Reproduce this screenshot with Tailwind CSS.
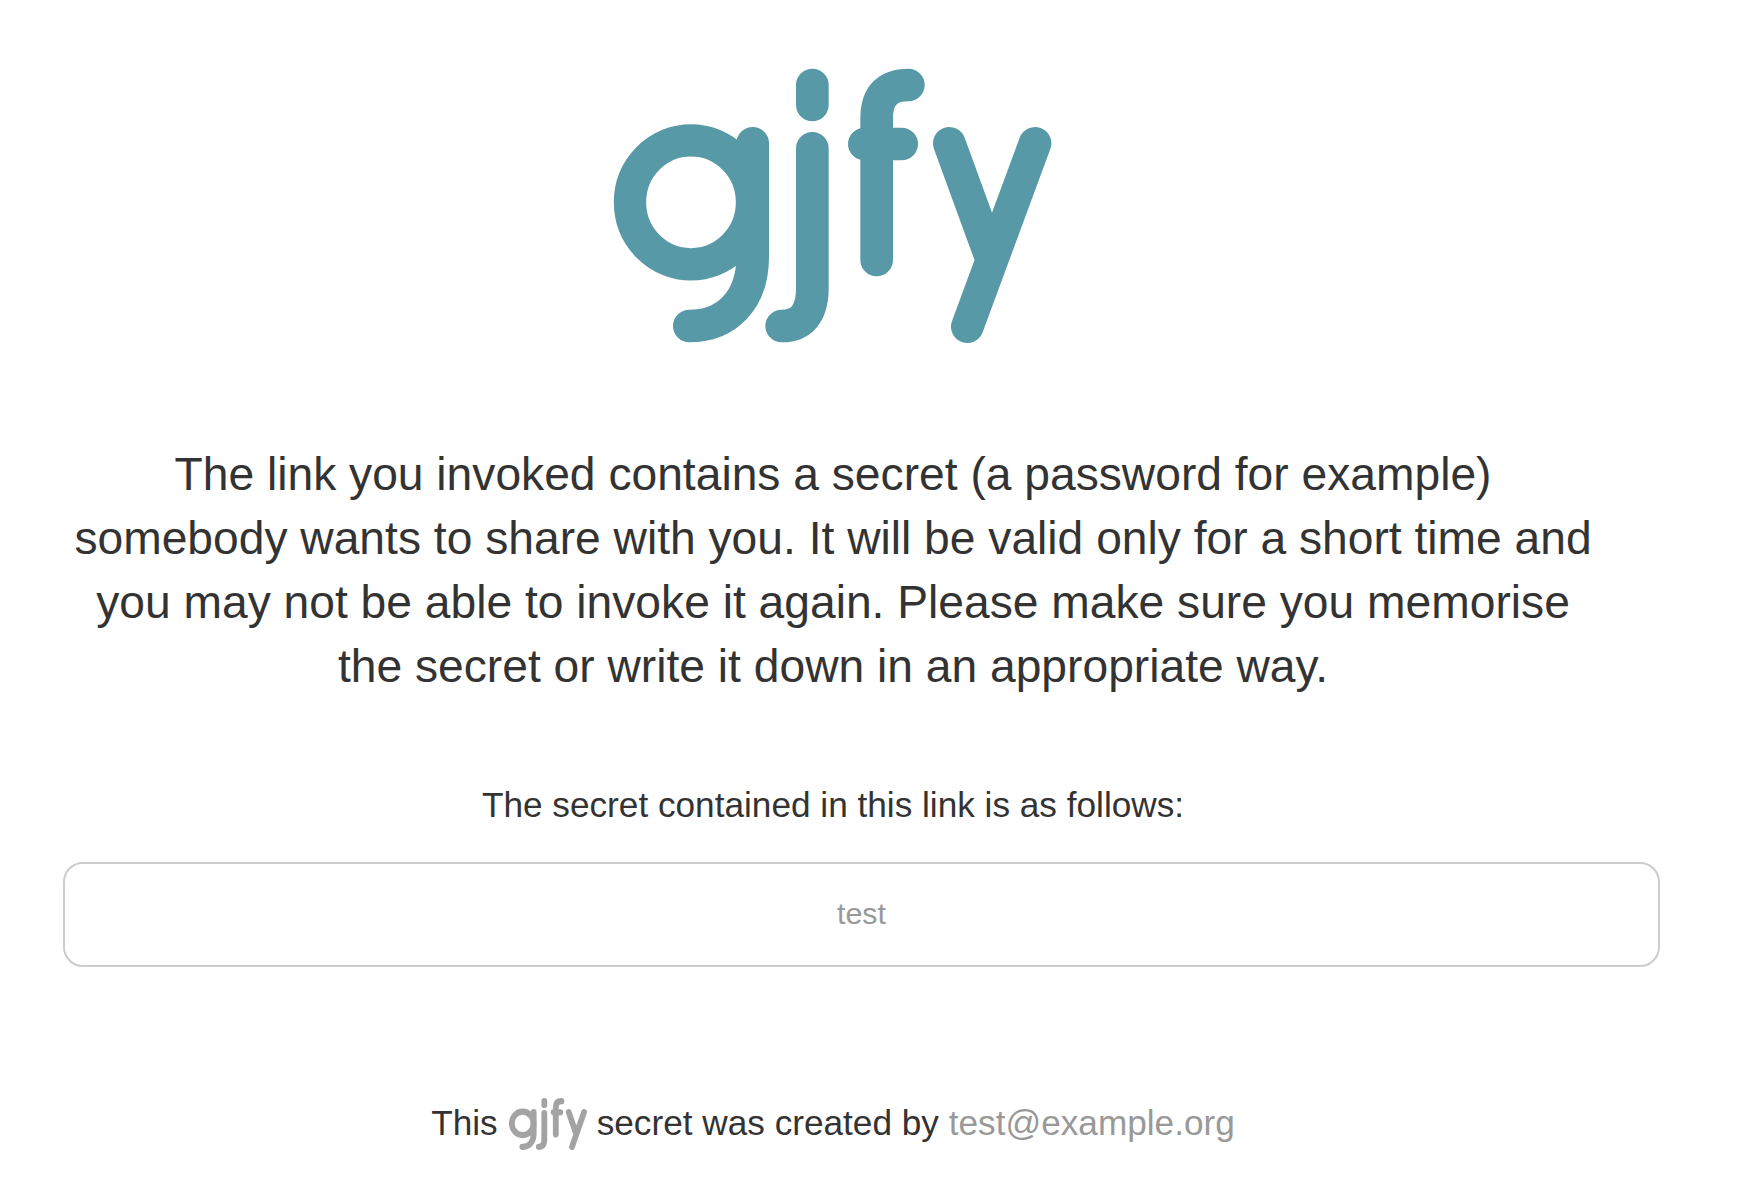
<!DOCTYPE html>
<html lang="en">

<head>
    <meta charset="UTF-8">
    <title>gjfy</title>
    <script src="https://cdn.jsdelivr.net/npm/@tailwindcss/browser@4"></script>
</head>

<body class="bg-white text-[#333] font-['Liberation_Sans',Arial,sans-serif] h-[1190px] overflow-hidden">
    <div class="w-[1666px] text-center">
        <div class="pt-[40px] pl-[14px] flex justify-center h-[380px]">
            <svg class="block w-[520px] h-[340px]" viewBox="0 0 1560 1020" fill="none" stroke="#5799a7" stroke-width="98" stroke-linecap="round">
                <ellipse cx="333" cy="487" rx="183" ry="186" stroke-width="97" />
                <path d="M518 310V650C518 780 440 858 328 858" />
                <path d="M697 135V195M697 325V745C697 820 665 858 605 858" />
                <path d="M890 660V235C890 165 925 135 985 135M853 312H965" />
                <path d="M1108 310L1232 650M1365 310L1162 860" />
            </svg>
        </div>
        <p class="mt-[62px] text-[46.2px] leading-[64px]">
            The link you invoked contains a secret (a password for example)<br>
            somebody wants to share with you. It will be valid only for a short time and<br>
            you may not be able to invoke it again. Please make sure you memorise<br>
            the secret or write it down in an appropriate way.
        </p>
        <p class="mt-[84px] text-[35.2px] leading-[46px]">The secret contained in this link is as follows:</p>
    </div>
    <div class="pl-[63px] pr-[80px] mt-[34px]">
        <div class="h-[105px] pb-[2px] border-2 border-[#ccc] rounded-[20px] flex items-center justify-center text-[30.4px] text-[#999]">test</div>
    </div>
    <div class="w-[1666px] mt-[128px] flex items-center justify-center text-[35.2px] leading-[56px]">
        <span>This</span>
        <svg class="block w-[78px] h-[52px] ml-[11px] mr-[10px] mt-[2px]" viewBox="103 85 1312 823" preserveAspectRatio="none" fill="none" stroke="#a3a3a3" stroke-width="98" stroke-linecap="round">
            <ellipse cx="333" cy="487" rx="183" ry="186" stroke-width="97" />
            <path d="M518 310V650C518 780 440 858 328 858" />
            <path d="M697 135V195M697 325V745C697 820 665 858 605 858" />
            <path d="M890 660V235C890 165 925 135 985 135M853 312H965" />
            <path d="M1108 310L1232 650M1365 310L1162 860" />
        </svg>
        <span>secret was created by <a href="#" class="text-[#999]">test@example.org</a></span>
    </div>
</body>

</html>
